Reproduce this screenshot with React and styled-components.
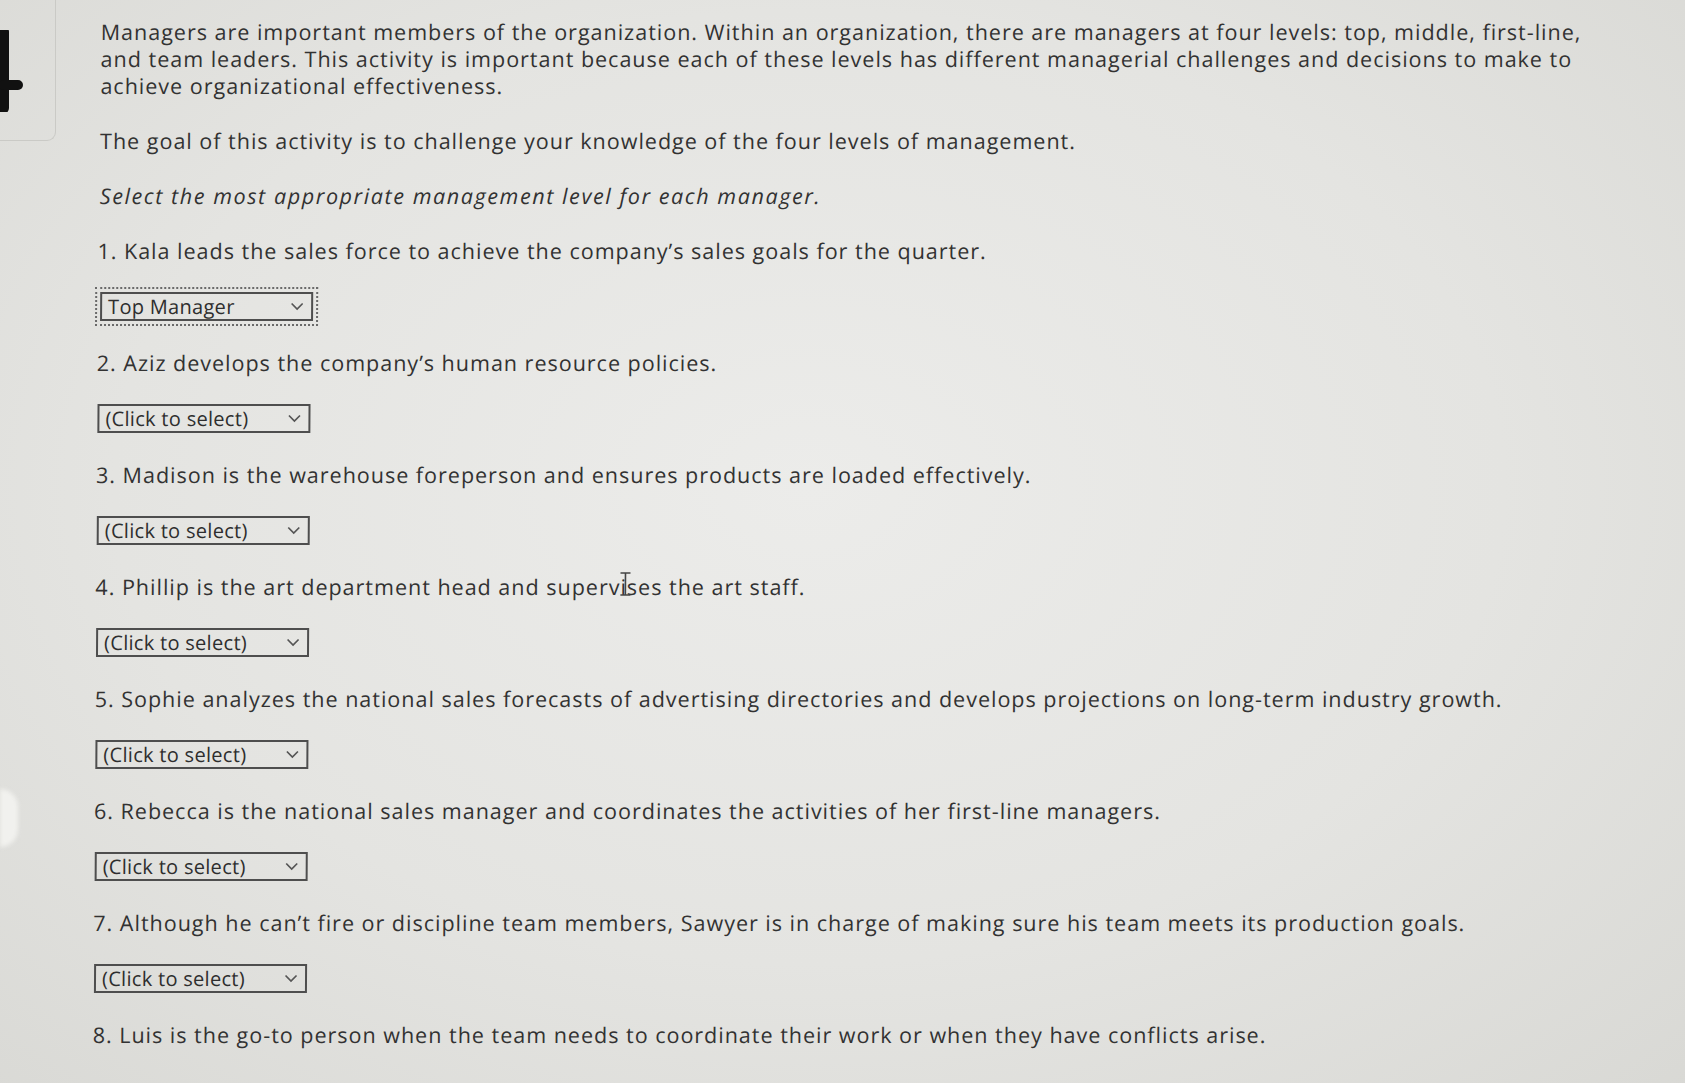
import React from "react";
import styled, { createGlobalStyle } from "styled-components";

const Global = createGlobalStyle`
  html, body { margin: 0; padding: 0; }
  body {
    font-family: "Open Sans", "Lato", sans-serif;
    background: #e2e2de;
  }
`;

const Page = styled.div`
  display: flex;
  min-height: 1083px;
  background: radial-gradient(ellipse 75% 80% at 48% 45%, #ececea 0%, #e4e4e1 55%, #d8d8d4 100%);
  overflow: hidden;
`;

const Side = styled.aside`
  width: 56px;
  flex: 0 0 56px;
  display: flex;
  flex-direction: column;
`;

const Tab = styled.div`
  height: 141px;
  border-right: 1.5px solid #cacac6;
  border-bottom: 1.5px solid #cacac6;
  border-bottom-right-radius: 9px;
  box-sizing: border-box;
  padding-top: 30px;
  display: flex;
`;

const Glow = styled.div`
  margin-top: 648px;
  width: 18px;
  height: 58px;
  border-radius: 0 30px 30px 0;
  background: #f1f1ee;
  filter: blur(2px);
`;

const Main = styled.main`
  display: flex;
  flex-direction: column;
  align-items: flex-start;
  gap: 28px;
  padding: 18px 0 0 45px;
  width: 1490px;
  color: #323232;
  font-size: 21.5px;
  font-weight: 500;
  letter-spacing: 1px;
  line-height: 27px;
  transform: skewX(-0.35deg);
  transform-origin: 0 0;
`;

const Para = styled.p`
  margin: 0;
  font-style: ${(p) => (p.$italic ? "italic" : "normal")};
  letter-spacing: ${(p) => (p.$italic ? "1.6px" : "1px")};
`;

const Question = styled.p`
  margin: 0 0 0 -2px;
`;

const Select = styled.div`
  box-sizing: border-box;
  width: 213px;
  height: 29px;
  margin-left: ${(p) => (p.$focused ? "1px" : "-1px")};
  border: 2px solid #4e4e4e;
  display: flex;
  align-items: center;
  justify-content: space-between;
  padding: 0 7px 0 6px;
  font-size: 20px;
  font-weight: 400;
  letter-spacing: 0.3px;
  color: #2e2e2e;
  outline: ${(p) => (p.$focused ? "2px dotted #6a6a6a" : "none")};
  outline-offset: 3px;
`;

const Cursor = styled.span`
  position: relative;
  display: inline-block;
  width: 0;
  height: 0;
  svg {
    position: absolute;
    left: -2px;
    top: -23px;
  }
`;

function Chevron() {
  return (
    <svg width="14" height="9" viewBox="0 0 14 9">
      <path d="M1.5 1.5 L7 7 L12.5 1.5" fill="none" stroke="#555" strokeWidth="1.7" />
    </svg>
  );
}

function PlusIcon() {
  return (
    <svg width="24" height="82" viewBox="0 0 24 82">
      <path d="M3 2 L3 78" stroke="#111" strokeWidth="12" strokeLinecap="round" />
      <path d="M4 55 L18 55" stroke="#111" strokeWidth="10" strokeLinecap="round" />
    </svg>
  );
}

function Dropdown({ value = "(Click to select)", focused }) {
  return (
    <Select $focused={focused}>
      <span>{value}</span>
      <Chevron />
    </Select>
  );
}

const questions = [
  "Kala leads the sales force to achieve the company’s sales goals for the quarter.",
  "Aziz develops the company’s human resource policies.",
  "Madison is the warehouse foreperson and ensures products are loaded effectively.",
  null,
  "Sophie analyzes the national sales forecasts of advertising directories and develops projections on long-term industry growth.",
  "Rebecca is the national sales manager and coordinates the activities of her first-line managers.",
  "Although he can’t fire or discipline team members, Sawyer is in charge of making sure his team meets its production goals.",
  "Luis is the go-to person when the team needs to coordinate their work or when they have conflicts arise.",
];

export default function App() {
  return (
    <>
      <Global />
      <Page>
        <Side>
          <Tab>
            <PlusIcon />
          </Tab>
          <Glow />
        </Side>
        <Main>
          <Para>
            Managers are important members of the organization. Within an organization, there are managers at four levels: top, middle, first-line, and team leaders. This activity is important because each of these levels has different managerial challenges and decisions to make to achieve organizational effectiveness.
          </Para>
          <Para>The goal of this activity is to challenge your knowledge of the four levels of management.</Para>
          <Para $italic>Select the most appropriate management level for each manager.</Para>
          {questions.map((q, i) => (
            <React.Fragment key={i}>
              <Question>
                {i + 1}.{" "}
                {q === null ? (
                  <>
                    Phillip is the art department head and superv
                    <Cursor>
                      <svg width="14" height="24" viewBox="0 0 14 24">
                        <path d="M2 1 L12 1 M7 1 L7 23 M2 23 L12 23" stroke="#444" strokeWidth="1.6" fill="none" />
                      </svg>
                    </Cursor>
                    ises the art staff.
                  </>
                ) : (
                  q
                )}
              </Question>
              {i < 7 && <Dropdown focused={i === 0} value={i === 0 ? "Top Manager" : undefined} />}
            </React.Fragment>
          ))}
        </Main>
      </Page>
    </>
  );
}
